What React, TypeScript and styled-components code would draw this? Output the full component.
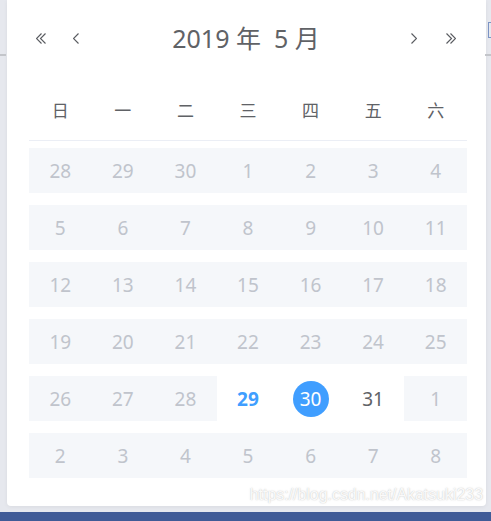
import React from "react";
import styled, { createGlobalStyle } from "styled-components";

const Global = createGlobalStyle`
  html, body { margin: 0; padding: 0; }
  body {
    width: 491px;
    height: 521px;
    overflow: hidden;
    background: #e6e8ee;
    font-family: "Noto Sans", "Noto Sans CJK SC", sans-serif;
  }
`;

const Page = styled.div`
  position: relative;
  width: 491px;
  height: 521px;
  display: flex;
  flex-direction: column;
  background: #e6e8ee;
`;

const Stage = styled.div`
  position: relative;
  flex: 1;
  display: flex;
  padding-left: 7px;
`;

const SideMark = styled.div<{ $left?: number; $right?: number }>`
  position: absolute;
  top: 54px;
  ${(p) => (p.$left !== undefined ? `left: ${p.$left}px;` : "")}
  ${(p) => (p.$right !== undefined ? `right: ${p.$right}px;` : "")}
  width: 6px;
  height: 2px;
  background: #c3c5ca;
`;

const Bracket = styled.div`
  position: absolute;
  top: 22px;
  right: 0;
  width: 2px;
  height: 14px;
  border: 1px solid #7b93c4;
  border-right: none;
`;

const Panel = styled.div`
  width: 479px;
  height: 506px;
  background: #ffffff;
  border-radius: 0 0 4px 4px;
  box-shadow: 0 1px 4px rgba(0, 0, 0, 0.06);
  box-sizing: border-box;
  padding: 0 19px 0 22px;
  display: flex;
  flex-direction: column;
`;

const Header = styled.div`
  height: 76px;
  display: flex;
  align-items: center;
  justify-content: space-between;
  padding: 0 11px 0 7px;
`;

const NavGroup = styled.div<{ $end?: boolean; $gap: number }>`
  display: flex;
  align-items: center;
  gap: ${(p) => p.$gap}px;
  width: 110px;
  justify-content: ${(p) => (p.$end ? "flex-end" : "flex-start")};
`;

const NavBtn = styled.span`
  display: inline-flex;
  align-items: center;
  color: #5a5c61;
`;

const Title = styled.div`
  font-size: 25px;
  color: #606266;
  line-height: 30px;
`;

const WeekRow = styled.div`
  display: grid;
  grid-template-columns: repeat(7, 1fr);
  padding: 20px 0 14px;
  border-bottom: 1px solid #ebeef5;
`;

const WeekCell = styled.div`
  text-align: center;
  font-size: 17px;
  line-height: 30px;
  color: #606266;
`;

const Grid = styled.div`
  margin-top: 7px;
  display: grid;
  grid-template-columns: repeat(7, 1fr);
  grid-auto-rows: 45px;
  row-gap: 12px;
`;

type Kind = "other" | "normal" | "today" | "selected";

const Cell = styled.div<{ $kind: Kind }>`
  display: flex;
  align-items: center;
  justify-content: center;
  background: ${(p) => (p.$kind === "other" ? "#f5f7fa" : "#ffffff")};
`;

const Num = styled.span<{ $kind: Kind }>`
  display: inline-flex;
  align-items: center;
  justify-content: center;
  width: 36px;
  height: 36px;
  border-radius: 50%;
  font-size: 19px;
  font-weight: ${(p) => (p.$kind === "today" ? 700 : 400)};
  color: ${(p) =>
    p.$kind === "other"
      ? "#c0c4cc"
      : p.$kind === "today"
      ? "#409eff"
      : p.$kind === "selected"
      ? "#ffffff"
      : "#606266"};
  background: ${(p) => (p.$kind === "selected" ? "#409eff" : "transparent")};
`;

const BottomBar = styled.div`
  height: 9px;
  background: #405b97;
`;

const Watermark = styled.div`
  position: absolute;
  right: 8px;
  bottom: 8px;
  font-family: "Liberation Sans", Arial, sans-serif;
  font-size: 15.9px;
  color: rgba(255, 255, 255, 0.92);
  text-shadow: 0 0 1px rgba(120, 120, 120, 0.35), 0 0 2px rgba(140, 140, 140, 0.25);
`;

const Chevron = ({ dir, double }: { dir: "left" | "right"; double?: boolean }) => {
  const w = double ? 10 : 6;
  const single = (x: number) =>
    dir === "left"
      ? `${x + 5.5},0.5 ${x + 0.5},5.5 ${x + 5.5},10.5`
      : `${x + 0.5},0.5 ${x + 5.5},5.5 ${x + 0.5},10.5`;
  return (
    <svg width={w} height="11" viewBox={`0 0 ${w} 11`} fill="none">
      <polyline points={single(0)} stroke="currentColor" strokeWidth="1.15" />
      {double && <polyline points={single(4)} stroke="currentColor" strokeWidth="1.15" />}
    </svg>
  );
};

const weekdays = ["日", "一", "二", "三", "四", "五", "六"];

const days: { n: number; k: Kind }[] = [
  ...[28, 29, 30, 1, 2, 3, 4, 5, 6, 7, 8, 9, 10, 11, 12, 13, 14, 15, 16, 17, 18, 19, 20, 21, 22, 23, 24, 25, 26, 27, 28].map(
    (n) => ({ n, k: "other" as Kind })
  ),
  { n: 29, k: "today" },
  { n: 30, k: "selected" },
  { n: 31, k: "normal" },
  ...[1, 2, 3, 4, 5, 6, 7, 8].map((n) => ({ n, k: "other" as Kind })),
];

export default function App() {
  return (
    <Page>
      <Global />
      <Stage>
        <SideMark $left={0} />
        <SideMark $right={0} />
        <Bracket />
        <Panel>
          <Header>
            <NavGroup $gap={27}>
              <NavBtn>
                <Chevron dir="left" double />
              </NavBtn>
              <NavBtn>
                <Chevron dir="left" />
              </NavBtn>
            </NavGroup>
            <Title>2019 年 &nbsp;5 月</Title>
            <NavGroup $end $gap={29}>
              <NavBtn>
                <Chevron dir="right" />
              </NavBtn>
              <NavBtn>
                <Chevron dir="right" double />
              </NavBtn>
            </NavGroup>
          </Header>
          <WeekRow>
            {weekdays.map((w) => (
              <WeekCell key={w}>{w}</WeekCell>
            ))}
          </WeekRow>
          <Grid>
            {days.map((d, i) => (
              <Cell key={i} $kind={d.k}>
                <Num $kind={d.k}>{d.n}</Num>
              </Cell>
            ))}
          </Grid>
        </Panel>
        <Watermark>https://blog.csdn.net/Akatsuki233</Watermark>
      </Stage>
      <BottomBar />
    </Page>
  );
}
